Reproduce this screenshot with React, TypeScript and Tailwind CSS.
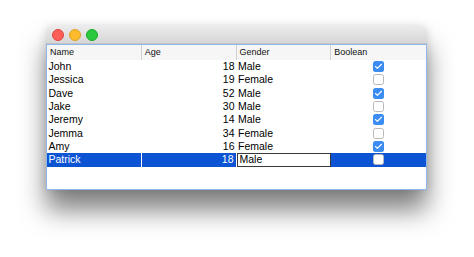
import { Check } from "lucide-react";

const rows = [
  { name: "John", age: 18, gender: "Male", flag: true },
  { name: "Jessica", age: 19, gender: "Female", flag: false },
  { name: "Dave", age: 52, gender: "Male", flag: true },
  { name: "Jake", age: 30, gender: "Male", flag: false },
  { name: "Jeremy", age: 14, gender: "Male", flag: true },
  { name: "Jemma", age: 34, gender: "Female", flag: false },
  { name: "Amy", age: 16, gender: "Female", flag: true },
  { name: "Patrick", age: 18, gender: "Male", flag: false },
];

const Box = ({ on }: { on: boolean }) =>
  on ? (
    <div className="w-[11px] h-[11px] rounded-[2.5px] bg-[#3b8cf3] flex items-center justify-center">
      <Check className="w-[9px] h-[9px] text-white" strokeWidth={3} />
    </div>
  ) : (
    <div className="w-[11px] h-[11px] rounded-[2.5px] bg-white border border-[#b8b8b8]" />
  );

const App = () => {
  return (
    <div className="w-[474px] h-[257px] bg-white overflow-hidden pt-[26px] pl-[46px] font-['Liberation_Sans',Arial,sans-serif]">
      <div className="w-[381px] rounded-t-[5px] rounded-b-[2px] shadow-[0_20px_26px_rgba(0,0,0,0.5),0_0_10px_rgba(0,0,0,0.12)]">
        {/* Title bar */}
        <div className="h-[18px] rounded-t-[5px] bg-gradient-to-b from-[#ececec] to-[#d6d6d6] border-b border-[#c4c4c4] flex items-center gap-[4.7px] pl-[6.3px]">
          <span className="w-[12px] h-[12px] rounded-full bg-[#fc5f57] border border-[#e0443e]" />
          <span className="w-[12px] h-[12px] rounded-full bg-[#fdbc2e] border border-[#dea123]" />
          <span className="w-[12px] h-[12px] rounded-full bg-[#2ac940] border border-[#1aab29]" />
        </div>

        {/* Table */}
        <div className="h-[146px] bg-white border border-[#8fb8ea]">
          <div className="h-[15px] grid grid-cols-4 bg-[#f6f6f6] text-[9px] text-[#111] leading-[15px]">
            <div className="pl-[3px] border-r border-[#d0d0d0]">Name</div>
            <div className="pl-[3px] border-r border-[#d0d0d0]">Age</div>
            <div className="pl-[3px] border-r border-[#d0d0d0]">Gender</div>
            <div className="pl-[3px]">Boolean</div>
          </div>
          {rows.map((r, i) => {
            const sel = i === rows.length - 1;
            return (
              <div
                key={r.name}
                className={`h-[13.33px] grid grid-cols-4 text-[10.5px] leading-[13.33px] ${
                  sel ? "bg-[#0c54d4] text-white" : "text-black"
                }`}
              >
                <div className={`pl-[1.5px] ${sel ? "border-r border-white" : ""}`}>{r.name}</div>
                <div className={`text-right pr-[2px] ${sel ? "border-r border-white" : ""}`}>{r.age}</div>
                {sel ? (
                  <div className="bg-white text-black border border-[#3a3a3a] pl-[2px] leading-[11.33px]">{r.gender}</div>
                ) : (
                  <div className="pl-[1.5px]">{r.gender}</div>
                )}
                <div className="flex items-center justify-center">
                  <Box on={r.flag} />
                </div>
              </div>
            );
          })}
        </div>
      </div>
    </div>
  );
};

export default App;
